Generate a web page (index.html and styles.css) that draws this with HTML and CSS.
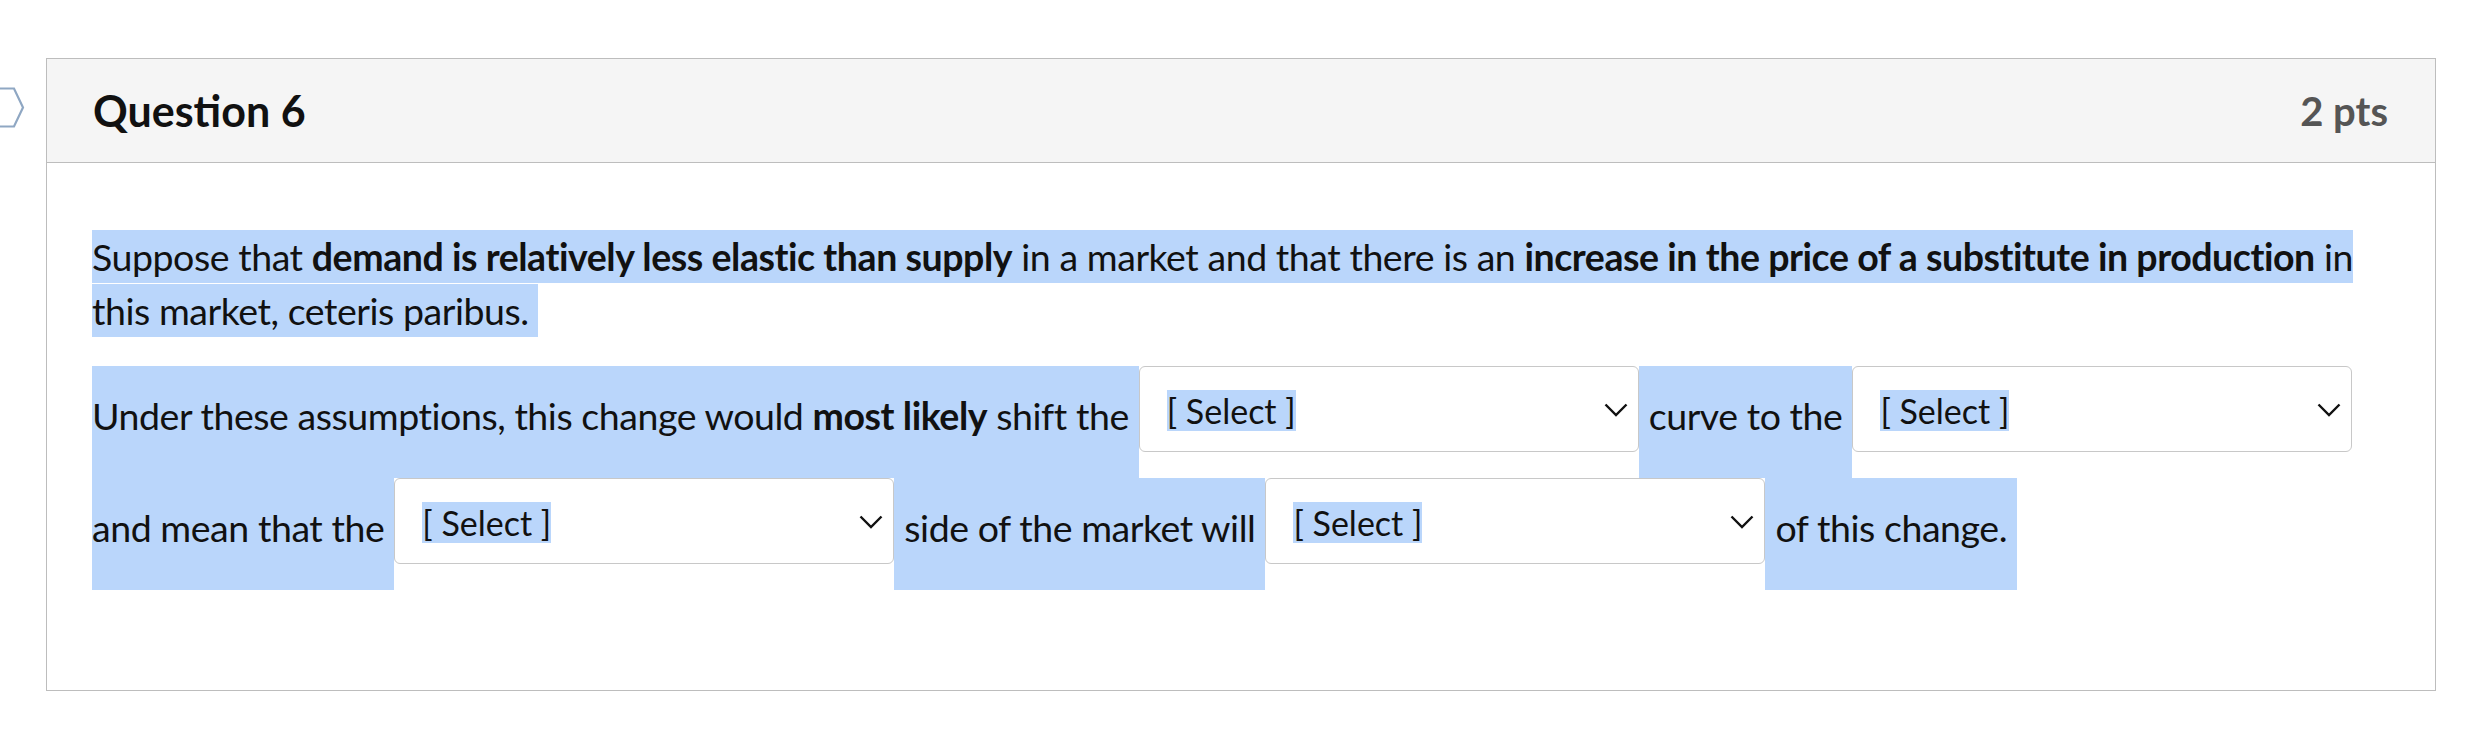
FILE: index.html
```html
<!DOCTYPE html>
<html lang="en">
<head>
<meta charset="utf-8">
<title>Question 6</title>
<link rel="stylesheet" href="styles.css">
</head>
<body>
<div class="page">
  <svg class="flag" width="46" height="42" viewBox="0 0 46 42" aria-hidden="true">
    <path d="M-4 1.5 H14 L23 20.5 L14 39.5 H-4" fill="none" stroke="#8fa7c3" stroke-width="2.2" stroke-linejoin="miter"/>
  </svg>
  <div class="card">
    <div class="card-header">
      <h2 class="q-title">Question 6</h2>
      <span class="q-pts">2 pts</span>
    </div>
    <div class="card-body">
      <p class="p1"><span class="hl">Suppose that <strong>demand is relatively less elastic than supply</strong> in a market and that there is an <strong>increase in the price of a substitute in production</strong> in this market, ceteris paribus.&nbsp;</span></p>
      <div class="p2">
        <span class="seg lead">Under these assumptions, this change would <strong>most likely</strong> shift the</span>
        <div class="sel"><span class="sel-text">[ Select ]</span><svg class="chev" width="24" height="14" viewBox="0 0 24 14"><polyline points="1.5,1.5 12,12 22.5,1.5" fill="none" stroke="#111" stroke-width="2.4"/></svg></div>
        <span class="seg">curve to the</span>
        <div class="sel"><span class="sel-text">[ Select ]</span><svg class="chev" width="24" height="14" viewBox="0 0 24 14"><polyline points="1.5,1.5 12,12 22.5,1.5" fill="none" stroke="#111" stroke-width="2.4"/></svg></div>
        <span class="seg lead">and mean that the</span>
        <div class="sel"><span class="sel-text">[ Select ]</span><svg class="chev" width="24" height="14" viewBox="0 0 24 14"><polyline points="1.5,1.5 12,12 22.5,1.5" fill="none" stroke="#111" stroke-width="2.4"/></svg></div>
        <span class="seg">side of the market will</span>
        <div class="sel"><span class="sel-text">[ Select ]</span><svg class="chev" width="24" height="14" viewBox="0 0 24 14"><polyline points="1.5,1.5 12,12 22.5,1.5" fill="none" stroke="#111" stroke-width="2.4"/></svg></div>
        <span class="seg">of this change.</span>
      </div>
    </div>
  </div>
</div>
</body>
</html>
```
FILE: styles.css
```css
html, body {
  margin: 0;
  padding: 0;
  background: #fff;
}
body {
  font-family: Lato, "Open Sans", "Liberation Sans", sans-serif;
  color: #111;
}
.page {
  display: flex;
  align-items: flex-start;
  padding-top: 58px;
}
.flag {
  flex: 0 0 46px;
  margin-top: 29px;
  overflow: visible;
}
.card {
  width: 2390px;
  box-sizing: border-box;
  border: 1px solid #bdbdbd;
  background: #fff;
}
.card-header {
  display: flex;
  align-items: center;
  justify-content: space-between;
  height: 103px;
  padding: 0 47px 0 46px;
  background: #f5f5f5;
  border-bottom: 1px solid #bdbdbd;
}
.q-title {
  margin: 0;
  font-size: 43px;
  font-weight: 700;
  color: #111;
}
.q-pts {
  font-size: 40px;
  font-weight: 700;
  color: #555;
}
.card-body {
  padding: 67px 45px 100px 45px;
}
.p1 {
  margin: 0;
  font-size: 37.5px;
  letter-spacing: -0.45px;
  line-height: 54px;
}
.hl {
  background: #bad6fb;
  padding: 4px 0;
}
.p1 strong, .p2 strong {
  font-weight: 700;
}
.p2 {
  margin-top: 28px;
  display: flex;
  flex-wrap: wrap;
  align-items: stretch;
  font-size: 37.5px;
  letter-spacing: -0.45px;
  line-height: 54px;
}
.seg {
  background: #bad6fb;
  padding: 23px 10px 0 10px;
  white-space: nowrap;
}
.seg.lead {
  padding-left: 0;
}
.sel {
  box-sizing: border-box;
  width: 500px;
  height: 86px;
  margin-bottom: 26px;
  border: 1px solid #c8c8c8;
  border-radius: 6px;
  background: #fff;
  display: flex;
  align-items: flex-start;
  justify-content: space-between;
  padding: 23px 10px 0 27px;
  letter-spacing: 0;
}
.sel-text {
  font-size: 34px;
  line-height: normal;
  background: #bad6fb;
  color: #111;
}
.chev {
  margin-top: 13px;
}
```
